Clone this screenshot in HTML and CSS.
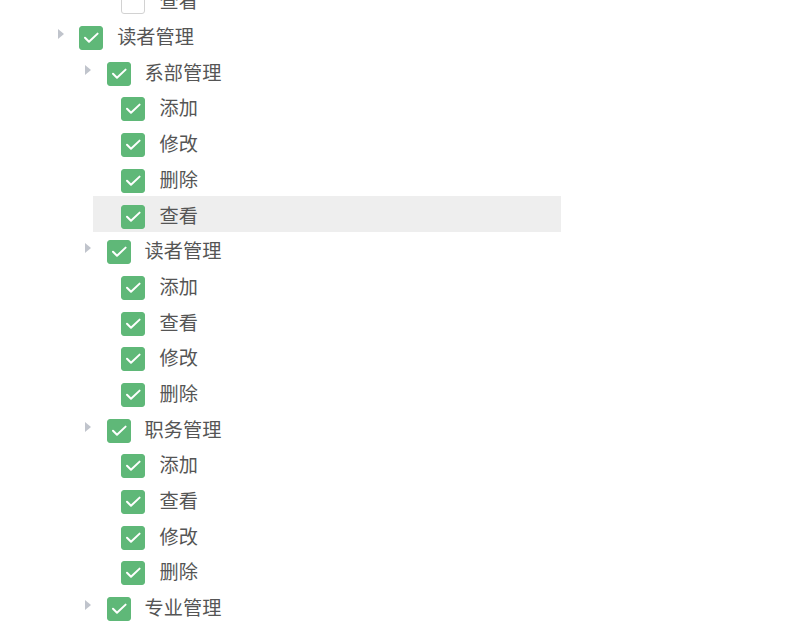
FILE: index.html
```html
<!DOCTYPE html>
<html lang="zh">
<head>
<meta charset="utf-8">
<title>权限树</title>
<link rel="stylesheet" href="styles.css">
</head>
<body>
<div class="tree">
  <div class="pack">
    <div class="pack">
      <div class="entry leaf"><span class="cb"></span><span class="txt">查看</span></div>
    </div>
  </div>

  <div class="entry"><span class="arrow"></span><span class="cb on"><svg viewBox="1 1 22 22"><polyline points="6,11.8 10,15.8 18.6,7.6"/></svg></span><span class="txt">读者管理</span></div>
  <div class="pack">
    <div class="entry"><span class="arrow"></span><span class="cb on"><svg viewBox="1 1 22 22"><polyline points="6,11.8 10,15.8 18.6,7.6"/></svg></span><span class="txt">系部管理</span></div>
    <div class="pack">
      <div class="entry leaf"><span class="cb on"><svg viewBox="1 1 22 22"><polyline points="6,11.8 10,15.8 18.6,7.6"/></svg></span><span class="txt">添加</span></div>
      <div class="entry leaf"><span class="cb on"><svg viewBox="1 1 22 22"><polyline points="6,11.8 10,15.8 18.6,7.6"/></svg></span><span class="txt">修改</span></div>
      <div class="entry leaf"><span class="cb on"><svg viewBox="1 1 22 22"><polyline points="6,11.8 10,15.8 18.6,7.6"/></svg></span><span class="txt">删除</span></div>
      <div class="entry leaf hover"><span class="cb on"><svg viewBox="1 1 22 22"><polyline points="6,11.8 10,15.8 18.6,7.6"/></svg></span><span class="txt">查看</span></div>
    </div>
    <div class="entry"><span class="arrow"></span><span class="cb on"><svg viewBox="1 1 22 22"><polyline points="6,11.8 10,15.8 18.6,7.6"/></svg></span><span class="txt">读者管理</span></div>
    <div class="pack">
      <div class="entry leaf"><span class="cb on"><svg viewBox="1 1 22 22"><polyline points="6,11.8 10,15.8 18.6,7.6"/></svg></span><span class="txt">添加</span></div>
      <div class="entry leaf"><span class="cb on"><svg viewBox="1 1 22 22"><polyline points="6,11.8 10,15.8 18.6,7.6"/></svg></span><span class="txt">查看</span></div>
      <div class="entry leaf"><span class="cb on"><svg viewBox="1 1 22 22"><polyline points="6,11.8 10,15.8 18.6,7.6"/></svg></span><span class="txt">修改</span></div>
      <div class="entry leaf"><span class="cb on"><svg viewBox="1 1 22 22"><polyline points="6,11.8 10,15.8 18.6,7.6"/></svg></span><span class="txt">删除</span></div>
    </div>
    <div class="entry"><span class="arrow"></span><span class="cb on"><svg viewBox="1 1 22 22"><polyline points="6,11.8 10,15.8 18.6,7.6"/></svg></span><span class="txt">职务管理</span></div>
    <div class="pack">
      <div class="entry leaf"><span class="cb on"><svg viewBox="1 1 22 22"><polyline points="6,11.8 10,15.8 18.6,7.6"/></svg></span><span class="txt">添加</span></div>
      <div class="entry leaf"><span class="cb on"><svg viewBox="1 1 22 22"><polyline points="6,11.8 10,15.8 18.6,7.6"/></svg></span><span class="txt">查看</span></div>
      <div class="entry leaf"><span class="cb on"><svg viewBox="1 1 22 22"><polyline points="6,11.8 10,15.8 18.6,7.6"/></svg></span><span class="txt">修改</span></div>
      <div class="entry leaf"><span class="cb on"><svg viewBox="1 1 22 22"><polyline points="6,11.8 10,15.8 18.6,7.6"/></svg></span><span class="txt">删除</span></div>
    </div>
    <div class="entry"><span class="arrow"></span><span class="cb on"><svg viewBox="1 1 22 22"><polyline points="6,11.8 10,15.8 18.6,7.6"/></svg></span><span class="txt">专业管理</span></div>
  </div>
</div>
</body>
</html>
```

FILE: styles.css
```css
html, body {
  margin: 0;
  padding: 0;
  background: #fff;
  overflow: hidden;
}

.tree {
  margin-top: -18.2px;
  margin-left: 38.2px;
  width: 522.8px;
  font-family: "Noto Sans CJK SC", "Noto Sans", sans-serif;
  font-size: 19.2px;
  color: #555;
}

.pack {
  padding-left: 27.4px;
}

.entry {
  height: 35.7px;
  display: flex;
  align-items: flex-start;
  padding-left: 19.5px;
  box-sizing: border-box;
}

.entry.leaf {
  padding-left: 28.5px;
}

.entry.hover {
  background: #eeeeee;
}

.arrow {
  width: 0;
  height: 0;
  margin-top: 11.5px;
  margin-right: 15.5px;
  border-top: 5px solid transparent;
  border-bottom: 5px solid transparent;
  border-left: 6.8px solid #c0c4cc;
}

.cb {
  flex: none;
  width: 24px;
  height: 24px;
  margin-top: 8.6px;
  box-sizing: border-box;
  border: 1px solid #d2d2d2;
  border-radius: 3px;
  background: #fff;
}

.cb.on {
  background: #5fb878;
  border-color: #5fb878;
}

.cb svg {
  display: block;
  width: 22px;
  height: 22px;
}

.cb polyline {
  fill: none;
  stroke: #fff;
  stroke-width: 2;
  stroke-linecap: round;
  stroke-linejoin: round;
}

.txt {
  margin-left: 14px;
  margin-top: 1.6px;
  line-height: 35.7px;
  white-space: nowrap;
}
```
